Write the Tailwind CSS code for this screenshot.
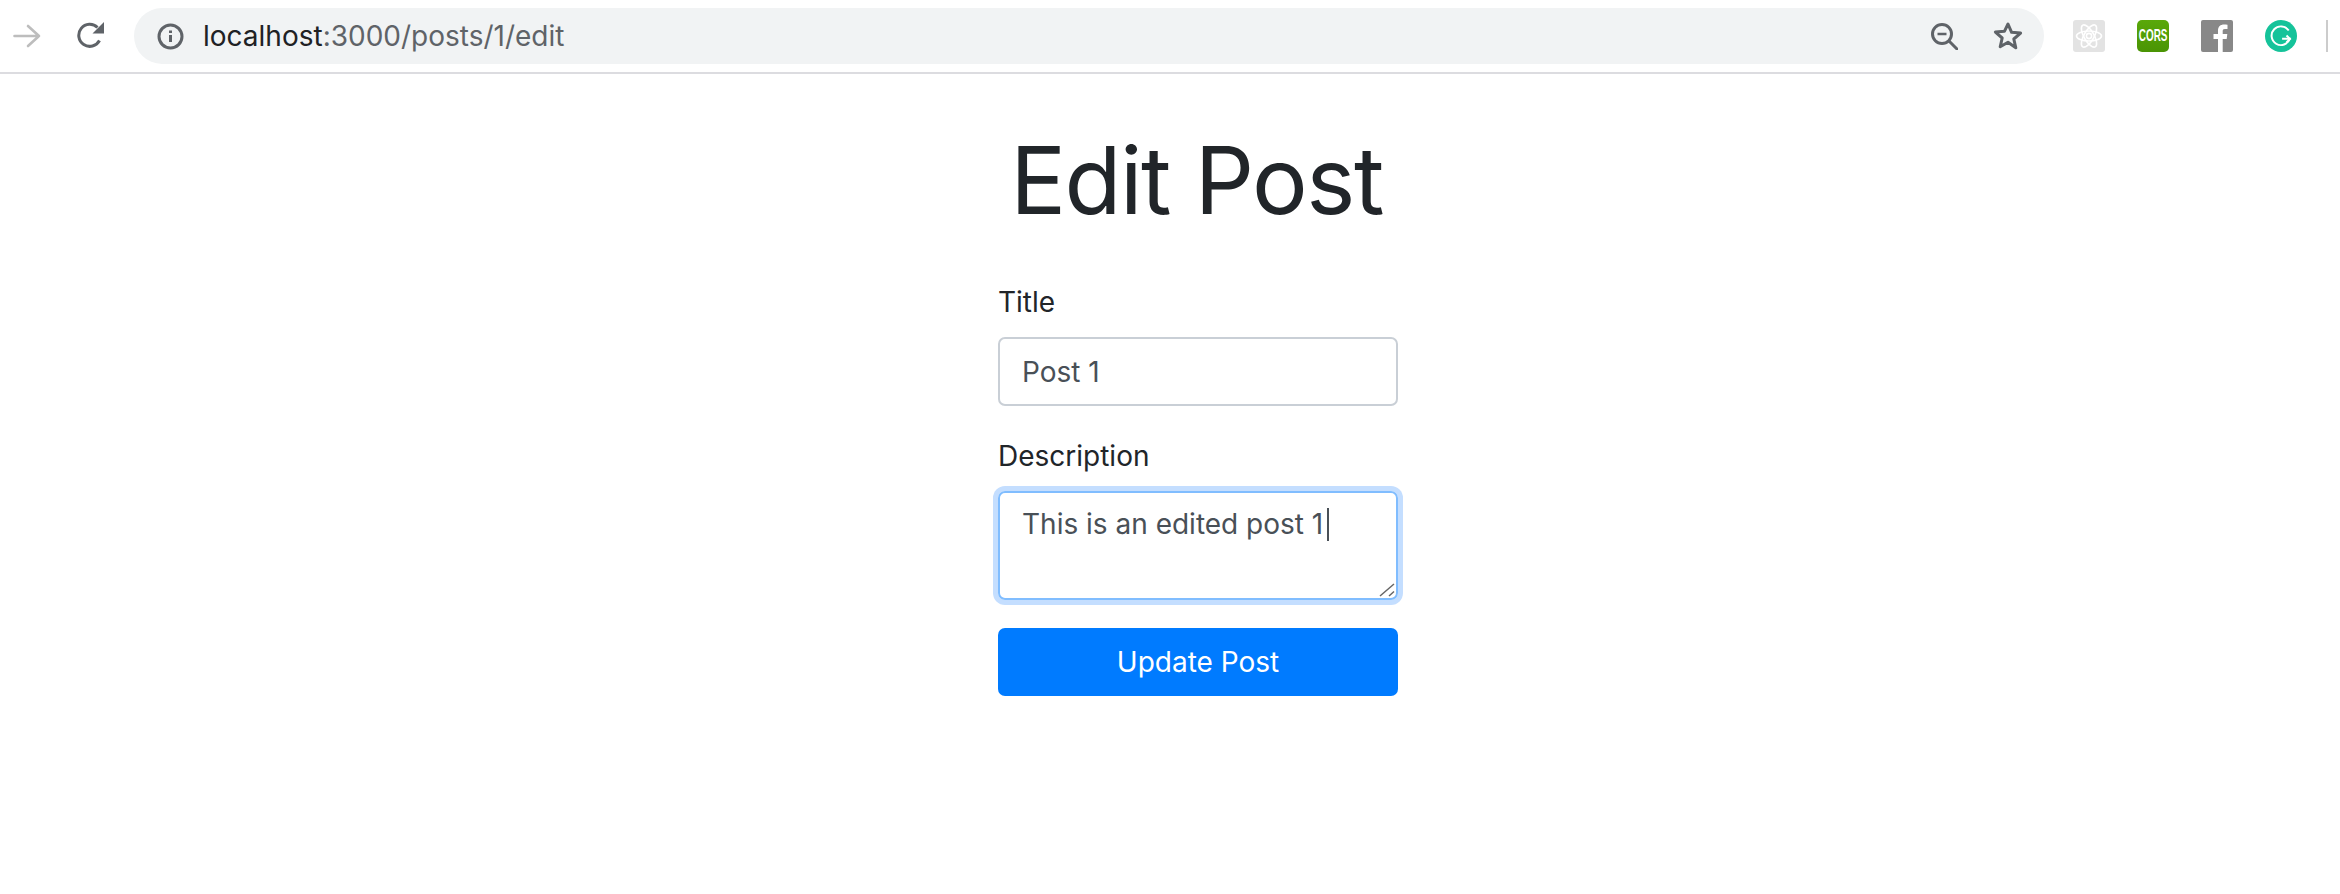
<!DOCTYPE html>
<html lang="en">
<head>
<meta charset="UTF-8">
<title>Edit Post</title>
<script src="https://cdn.jsdelivr.net/npm/@tailwindcss/browser@4"></script>
</head>
<body class="bg-white font-['Inter',sans-serif] overflow-hidden">
  <!-- browser toolbar -->
  <div class="h-[74px] flex items-center border-b-2 border-[#dcdce0]">
    <svg class="w-[28px] h-[24px] ml-[13px] text-[#bdbdbd]" viewBox="0 0 28 24" fill="none" stroke="currentColor" stroke-width="2.6" stroke-linecap="round" stroke-linejoin="round"><path d="M1.5 12H26M15 2l11 10-11 10"/></svg>
    <svg class="w-[28px] h-[28px] ml-[36px] text-[#5f6368]" viewBox="0 0 28 28" fill="none"><path d="M22.5 18.500A11 11 0 1 1 20.500 5.500" stroke="currentColor" stroke-width="3"/><path d="M15.500 11.500H27V0z" fill="currentColor"/></svg>
    <div class="ml-[29px] w-[1910px] h-[56px] rounded-full bg-[#f1f3f4] flex items-center">
      <svg class="w-[27px] h-[27px] ml-[23px] text-[#5f6368]" viewBox="0 0 27 27" fill="none"><circle cx="13.500" cy="13.500" r="11.500" stroke="currentColor" stroke-width="3"/><path d="M13.500 12v7M13.500 7.500v2.400" stroke="currentColor" stroke-width="3"/></svg>
      <span class="ml-[19px] text-[28px] leading-none text-[#202124]">localhost<span class="text-[#5f6368]">:3000/posts/1/edit</span></span>
      <svg class="w-[27px] h-[27px] ml-auto text-[#5f6368]" viewBox="0 0 27 27" fill="none" stroke="currentColor" stroke-width="3"><circle cx="11" cy="11" r="9.500"/><path d="M6.500 11h9" stroke-width="2.500"/><path d="M18 18l8 8" stroke-linecap="round"/></svg>
      <svg class="w-[30px] h-[30px] ml-[35px] mr-[21px] text-[#5f6368]" viewBox="0 0 30 30" fill="none" stroke="currentColor" stroke-width="3" stroke-linejoin="round"><path d="M15 3l3.600 8.300 9 .8-6.800 5.900 2 8.800L15 21.200l-7.800 4.600 2-8.800-6.800-5.900 9-.8z"/></svg>
    </div>
    <!-- extensions -->
    <div class="ml-[29px] w-[32px] h-[32px] rounded-[3px] bg-[#e3e3e3] flex items-center justify-center">
      <svg class="w-[28px] h-[28px]" viewBox="0 0 28 28" fill="none" stroke="#fff" stroke-width="1.600"><ellipse cx="14" cy="14" rx="12.500" ry="5"/><ellipse cx="14" cy="14" rx="12.500" ry="5" transform="rotate(60 14 14)"/><ellipse cx="14" cy="14" rx="12.500" ry="5" transform="rotate(120 14 14)"/><circle cx="14" cy="14" r="2.600"/></svg>
    </div>
    <div class="ml-[32px] w-[32px] h-[32px] rounded-[5px] bg-gradient-to-b from-[#5aa80a] to-[#4a9404] flex items-center justify-center text-white font-['Liberation_Sans',sans-serif] font-bold text-[16px] leading-none"><span class="scale-x-[0.62] scale-y-[1.05]">CORS</span></div>
    <div class="ml-[32px] w-[32px] h-[32px] rounded-[2px] bg-[#888888] overflow-hidden">
      <svg class="w-[32px] h-[32px]" viewBox="0 0 32 32"><path d="M17 32V19h-4.500v-5H17v-3.500C17 6.500 19.500 4.500 23 4.500c1.600 0 3 .1 3.500.2v4.300H24c-1.900 0-2.300.9-2.300 2.200V14h4.600l-.6 5h-4v13z" fill="#fff"/></svg>
    </div>
    <div class="ml-[32px] w-[32px] h-[32px] rounded-full bg-[#15c39a] flex items-center justify-center">
      <svg class="w-[22px] h-[22px]" viewBox="0 0 20 20" fill="none" stroke="#fff" stroke-width="1.800"><path d="M17 5A8.500 8.500 0 1 0 18 12.500H11"/><path d="M15 9.500l3.200 3.200-3.200 3.200"/></svg>
    </div>
    <div class="ml-[29px] w-[2px] h-[32px] bg-[#cccccc]"></div>
  </div>

  <!-- edit form -->
  <div class="w-[400px] mx-auto mt-[60px] relative left-[28px]">
    <h1 class="text-[93px] leading-[1] text-[#212529] font-normal text-center whitespace-nowrap -mx-[40px] pr-[3px] tracking-[-1.5px]">Edit Post</h1>
    <form class="mt-[59px]">
      <label class="block text-[28px] leading-[32px] text-[#212529]">Title</label>
      <input class="block mt-[19px] w-full h-[69px] px-[22px] border-2 border-[#c9cfd6] rounded-[7px] text-[28px] text-[#495057] outline-none" value="Post 1">
      <label class="block mt-[34px] text-[28px] leading-[32px] text-[#212529]">Description</label>
      <div class="relative mt-[19px]">
        <textarea class="block w-full h-[109px] px-[22px] py-[11px] border-2 border-[#80bdff] rounded-[7px] shadow-[0_0_0_5px_#c4deff] text-[28px] leading-[40px] text-[#495057] outline-none resize-none">This is an edited post 1</textarea>
        <span class="absolute left-[329px] top-[17px] w-[2px] h-[33px] bg-[#495057]"></span>
        <svg class="absolute right-[3px] bottom-[3px] w-[16px] h-[14px]" viewBox="0 0 16 14" fill="none" stroke="#666" stroke-width="1.500"><path d="M1 13L15 1M10 13l5-4.500"/></svg>
      </div>
      <button type="button" class="block mt-[28px] w-full h-[68px] rounded-[7px] bg-[#007bff] text-white text-[28px]">Update Post</button>
    </form>
  </div>
</body>
</html>
